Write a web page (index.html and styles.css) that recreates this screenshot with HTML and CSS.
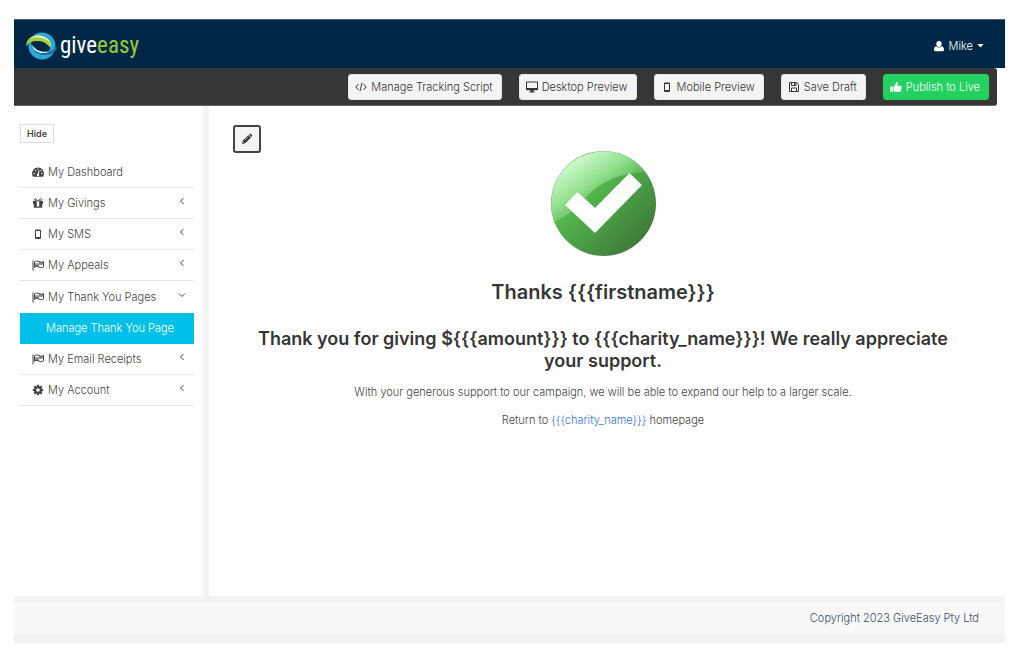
FILE: index.html
```html
<!DOCTYPE html>
<html lang="en">
<head>
  <meta charset="UTF-8">
  <meta name="viewport" content="width=device-width, initial-scale=1.0">
  <title>Manage Thank You Page</title>
  <link rel="stylesheet" href="styles.css">
</head>
<body>

  <!-- Shared icon shapes -->
  <svg class="sprite" aria-hidden="true">
    <symbol id="icon-flag" viewBox="0 0 12 12">
      <path d="M1 1.500v10" stroke="currentColor" stroke-width="1"/>
      <path d="M2.500 2.800c2-1.200 3-1 4.500-.2s2.500.9 4.500-.1v5.500c-2 1-3 .9-4.500.1s-2.500-1-4.500.2z" fill="none" stroke="currentColor" stroke-width="1"/>
      <path d="M2.500 4.800c2-1 2.500-1 4.500 0V2.600c1.500.8 2.500.9 4.500 0v2.700c-2 .9-3 .9-4.500.1v2.700c-1.500-.8-2.500-1-4.500.2z" fill="currentColor" opacity=".6"/>
    </symbol>
    <symbol id="icon-mobile" viewBox="0 0 12 12">
      <path fill-rule="evenodd" fill="currentColor" d="M4 1.500h4q1 0 1 1v7.500q0 1-1 1H4q-1 0-1-1V2.500q0-1 1-1zM4 3v6h4V3z"/>
    </symbol>
    <symbol id="icon-left" viewBox="0 0 8 8">
      <path d="M5.500 1L2.500 4l3 3" fill="none" stroke="currentColor" stroke-width="1"/>
    </symbol>
    <symbol id="icon-down" viewBox="0 0 8 8">
      <path d="M1 2.500l3 3 3-3" fill="none" stroke="currentColor" stroke-width="1"/>
    </symbol>
  </svg>

  <header class="header">
    <a class="logo" href="#">
      <svg class="logo-mark" viewBox="0 0 32 28" aria-hidden="true">
        <circle cx="16" cy="14" r="13.500" fill="#29abe2"/>
        <ellipse cx="14.500" cy="14" rx="10" ry="5" transform="rotate(22 14.500 14)" fill="#002846"/>
        <path d="M0 13.500C1 6 7 2.500 14 3.500c7 1 11.500 5 11.500 11.500l-3-1C20 10.500 16 9 11.500 9 7 9 3 10 .5 14z" fill="#a6ce39"/>
        <path d="M3.500 7C8 2.500 16 2.200 21 6.500c2 1.700 3.500 3.500 4 5.500-3-4-7-6-11.500-6.500C9.500 5 6 5.500 3.500 7z" fill="#eaf6d0"/>
        <path d="M31.500 14c-1 6.500-7 9.500-14 9-6.500-.5-11-4.500-11.500-10 4 5 8 7 13 7 5.500 0 9.500-2 12.500-6z" fill="#1a6795"/>
        <path d="M6 12.500c3 5.500 8.500 8.300 17.500 7-7 3.500-16.500 1-17.500-7z" fill="#e6f5fc"/>
      </svg>
      <span class="logo-text">give<span class="logo-accent">easy</span></span>
    </a>
    <button class="user-menu" type="button">
      <svg class="icon" viewBox="0 0 12 12" aria-hidden="true">
        <path fill="currentColor" d="M6 1c1.700 0 2.700 1.200 2.700 2.800S7.500 7 6 7 3.300 5.400 3.300 3.800 4.300 1 6 1zM3.500 6.300C4.800 8 7.200 8 8.500 6.300c1.600.2 2.500 1.500 2.500 3.700 0 .7-.5 1.200-1.300 1.200H2.300C1.500 11.200 1 10.700 1 10c0-2.200.9-3.500 2.500-3.700z"/>
      </svg>
      <span>Mike</span>
      <svg class="caret" viewBox="0 0 8 5" aria-hidden="true"><path d="M0 0h8L4 4.500z" fill="currentColor"/></svg>
    </button>
  </header>

  <div class="page">
    <div class="toolbar">
      <button class="btn" type="button">
        <svg class="icon" viewBox="0 0 12 12" aria-hidden="true"><path d="M3.500 3L.8 6l2.700 3M8.500 3l2.700 3-2.700 3M7 1.800l-2 8.400" fill="none" stroke="currentColor" stroke-width="1"/></svg>
        Manage Tracking Script
      </button>
      <button class="btn" type="button">
        <svg class="icon" viewBox="0 0 12 12" aria-hidden="true"><path fill-rule="evenodd" fill="currentColor" d="M.8.500h10.400q.8 0 .8.800v7.200q0 .8-.8.800H7.500V10.500h1.200v1H3.300v-1h1.200V9.300H.8Q0 9.300 0 8.500V1.300Q0 .500.800.500zM1 1.500v5.500h10V1.500z"/></svg>
        Desktop Preview
      </button>
      <button class="btn" type="button">
        <svg class="icon" aria-hidden="true"><use href="#icon-mobile"/></svg>
        Mobile Preview
      </button>
      <button class="btn" type="button">
        <svg class="icon" viewBox="0 0 12 12" aria-hidden="true">
          <path d="M1.500 1.500h7l2 2v7h-9z" fill="none" stroke="currentColor" stroke-width="1"/>
          <path d="M3.500 1.500v3h4.500v-3M3.500 10.500V7h5v3.500M6.500 2v2" fill="none" stroke="currentColor" stroke-width="1"/>
        </svg>
        Save Draft
      </button>
      <button class="btn btn-publish" type="button">
        <svg class="icon" viewBox="0 0 12 12" aria-hidden="true"><path fill="currentColor" d="M.3 5.500h2.500v5.300H.3zM3.500 5.600C5 4.800 5.600 3.500 5.800 1.800 5.900.8 7.600.8 7.800 2.300c.1.800-.2 1.700-.6 2.500h3.300c1.200 0 1.500 1.200.8 1.800.5.600.4 1.300-.2 1.700.3.600.1 1.200-.4 1.500.1.800-.4 1.200-1.300 1.200H7c-1.500 0-2.300-.5-3.500-.6z"/></svg>
        Publish to Live
      </button>
    </div>

    <div class="columns">
      <nav class="sidebar">
        <button class="btn-hide" type="button">Hide</button>
        <ul class="menu">
          <li><a class="menu-link" href="#">
            <svg class="icon" viewBox="0 0 12 12" aria-hidden="true">
              <path fill="currentColor" d="M6 1.500a6 6 0 0 1 5 9.200H1A6 6 0 0 1 6 1.500z"/>
              <path d="M6 9l1-4.500" stroke="#fff" stroke-width="1"/>
              <g fill="#fff"><circle cx="6" cy="9" r="1.200"/><circle cx="2.200" cy="7.500" r=".7"/><circle cx="3.400" cy="4.600" r=".7"/><circle cx="6" cy="3.200" r=".6"/><circle cx="8.900" cy="4.600" r=".7"/><circle cx="9.900" cy="7.500" r=".7"/></g>
            </svg>
            My Dashboard</a></li>
          <li><a class="menu-link" href="#">
            <svg class="icon" viewBox="0 0 12 12" aria-hidden="true">
              <path fill="currentColor" d="M1 4h3.800v3H1zM7.200 4H11v3H7.200zM1.800 7h3v3.800h-3zM7.200 7h3v3.800h-3zM4.800 9.500h2.400v1.300H4.800z"/>
              <path d="M5.500 4C4.500 1.500 2.500 1.200 2.500 2.800 2.500 3.800 4 4 5.500 4zM6.500 4c1-2.500 3-2.800 3-1.200 0 1-1.500 1.200-3 1.200z" fill="none" stroke="currentColor" stroke-width="1"/>
            </svg>
            My Givings<svg class="arrow" aria-hidden="true"><use href="#icon-left"/></svg></a></li>
          <li><a class="menu-link" href="#">
            <svg class="icon" aria-hidden="true"><use href="#icon-mobile"/></svg>
            My SMS<svg class="arrow" aria-hidden="true"><use href="#icon-left"/></svg></a></li>
          <li><a class="menu-link" href="#">
            <svg class="icon" aria-hidden="true"><use href="#icon-flag"/></svg>
            My Appeals<svg class="arrow" aria-hidden="true"><use href="#icon-left"/></svg></a></li>
          <li>
            <a class="menu-link menu-open" href="#">
              <svg class="icon" aria-hidden="true"><use href="#icon-flag"/></svg>
              My Thank You Pages<svg class="arrow" aria-hidden="true"><use href="#icon-down"/></svg></a>
            <a class="submenu-link" href="#">Manage Thank You Page</a>
          </li>
          <li><a class="menu-link" href="#">
            <svg class="icon" aria-hidden="true"><use href="#icon-flag"/></svg>
            My Email Receipts<svg class="arrow" aria-hidden="true"><use href="#icon-left"/></svg></a></li>
          <li><a class="menu-link" href="#">
            <svg class="icon" viewBox="0 0 12 12" aria-hidden="true">
              <circle cx="6" cy="6" r="2.900" fill="none" stroke="currentColor" stroke-width="2.200"/>
              <path d="M6 .8v1.700M6 9.500v1.700M.8 6h1.700M9.500 6h1.700M2.300 2.300l1.200 1.200M8.500 8.500l1.200 1.200M2.300 9.700l1.200-1.200M8.500 3.500l1.200-1.200" stroke="currentColor" stroke-width="2"/>
            </svg>
            My Account<svg class="arrow" aria-hidden="true"><use href="#icon-left"/></svg></a></li>
        </ul>
      </nav>

      <main class="content">
        <button class="btn-edit" type="button" aria-label="Edit">
          <svg class="icon" viewBox="0 0 12 12" aria-hidden="true">
            <path fill="currentColor" d="M1 11l.7-3.200L7.500 2l2.500 2.500-5.800 5.800zM8.100 1.400l.7-.6q.5-.4 1 0l1.400 1.400q.4.500 0 1l-.6.700z"/>
            <path d="M3.500 7.500l4-4M2 8.800l1.200 1.200" stroke="#f4f4f4" stroke-width=".6"/>
          </svg>
        </button>
        <div class="thanks">
          <svg class="check" viewBox="0 0 105 105" role="img" aria-label="Success">
            <defs>
              <linearGradient id="ball" x1=".2" y1=".2" x2=".85" y2=".85">
                <stop offset=".2" stop-color="#55bd4e"/>
                <stop offset="1" stop-color="#3f7b3b"/>
              </linearGradient>
              <linearGradient id="shine" x1=".15" y1=".1" x2=".75" y2=".75">
                <stop offset="0" stop-color="#dcffdc"/>
                <stop offset=".5" stop-color="#92e08d"/>
                <stop offset=".9" stop-color="#4ca648"/>
              </linearGradient>
              <linearGradient id="tick" x1="0" y1="0" x2="0" y2="1">
                <stop offset="0" stop-color="#f3fbf3"/>
                <stop offset=".6" stop-color="#fff"/>
              </linearGradient>
            </defs>
            <circle cx="52.500" cy="52.500" r="52.500" fill="url(#ball)"/>
            <path d="M3.500 71A52.500 52.500 0 0 1 94.500 21Q58 22 35 46 22 62 3.500 71z" fill="url(#shine)"/>
            <path d="M14 54l12.500-13L44 57 78.500 22 91 34 44 82z" fill="url(#tick)"/>
          </svg>
          <h1>Thanks {{{firstname}}}</h1>
          <h2>Thank you for giving ${{{amount}}} to {{{charity_name}}}! We really appreciate your support.</h2>
          <p>With your generous support to our campaign, we will be able to expand our help to a larger scale.</p>
          <p>Return to <a href="#">{{{charity_name}}}</a> homepage</p>
        </div>
      </main>
    </div>
  </div>

  <footer class="footer">Copyright 2023 GiveEasy Pty Ltd</footer>

</body>
</html>
```
FILE: styles.css
```css
* {
  box-sizing: border-box;
}

body {
  display: flex;
  flex-direction: column;
  min-height: 100vh;
  margin: 0;
  padding: 19px 19px 4px 14px;
  background-color: #fff;
  color: #444;
  font-family: Inter, "Liberation Sans", sans-serif;
  font-size: 11px;
  font-weight: 300;
}

button {
  font-family: inherit;
  font-size: 11px;
  font-weight: 300;
  cursor: pointer;
}

.sprite {
  display: none;
}

.icon {
  width: 12px;
  height: 12px;
  flex: none;
}

/* Header */
.header {
  display: flex;
  align-items: center;
  justify-content: space-between;
  height: 49px;
  padding: 3px 21px 0 12px;
  background-color: #002846;
  border-top: 1px solid #4d6478;
}

.logo {
  display: flex;
  align-items: center;
  gap: 2px;
  text-decoration: none;
}

.logo-mark {
  width: 32px;
  height: 28px;
}

.logo-text {
  color: #fff;
  font-family: "Roboto Condensed", "Liberation Sans Narrow", Roboto, sans-serif;
  font-size: 23px;
  font-weight: 400;
  line-height: 28px;
}

.logo-accent {
  color: #9aca3c;
}

.user-menu {
  display: flex;
  align-items: center;
  gap: 4px;
  padding: 4px 0;
  border: none;
  background: none;
  color: #fff;
}

.caret {
  width: 7px;
  height: 4px;
}

/* Toolbar */
.page {
  display: flex;
  flex: 1;
  flex-direction: column;
  margin-right: 8px;
}

.toolbar {
  display: flex;
  justify-content: flex-end;
  gap: 17px;
  padding: 6px 8px 5px;
  background-color: #363636;
  border-bottom: 1px solid #666;
  border-radius: 0 3px 3px 0;
}

.btn {
  display: flex;
  align-items: center;
  gap: 4px;
  height: 26px;
  padding: 0 8px 0 6px;
  border: 1px solid #e4e4e4;
  border-radius: 3px;
  background-color: #f4f4f4;
  color: #363636;
}

.btn-publish {
  border-color: #23d160;
  background-color: #23d160;
  color: #fff;
}

/* Sidebar */
.columns {
  display: flex;
  flex: 1;
}

.sidebar {
  width: 195px;
  flex: none;
  padding: 18px 9px 0 6px;
  border-right: 6px solid #f4f4f4;
}

.btn-hide {
  height: 19px;
  padding: 0 6px;
  border: 1px solid #ddd;
  background-color: #fff;
  color: #444;
  font-size: 9px;
  font-weight: 600;
}

.menu {
  margin: 14px 0 0;
  padding: 0;
  list-style: none;
}

.menu-link {
  display: flex;
  align-items: center;
  gap: 4px;
  height: 31px;
  padding: 0 8px 0 12px;
  border-bottom: 1px solid #e7e7e7;
  color: #444;
  text-decoration: none;
}

.menu-open {
  height: 32px;
  border-bottom: none;
}

.arrow {
  width: 8px;
  height: 8px;
  margin: 0 0 5px auto;
}

.submenu-link {
  display: block;
  padding-left: 26px;
  background-color: #00bfe8;
  color: #fff;
  line-height: 31px;
  text-decoration: none;
}

/* Content */
.content {
  flex: 1;
  padding: 19px 24px;
}

.btn-edit {
  display: flex;
  align-items: center;
  justify-content: center;
  width: 28px;
  height: 28px;
  padding: 0;
  border: 2px solid #444;
  border-radius: 3px;
  background-color: #f4f4f4;
  color: #363636;
}

.thanks {
  padding: 0 20px;
  text-align: center;
}

.check {
  display: block;
  width: 105px;
  height: 105px;
  margin: -2px auto 24px;
}

h1, h2 {
  margin: 0;
  color: #363636;
  font-weight: 600;
}

h1 {
  margin-bottom: 24px;
  font-size: 20px;
  line-height: 24px;
}

h2 {
  margin-bottom: 12px;
  font-size: 18px;
  line-height: 22px;
}

p {
  margin: 0 0 12px;
  line-height: 16px;
}

p a {
  color: #3273dc;
  text-decoration: none;
}

/* Footer */
.footer {
  height: 47px;
  padding: 0 26px;
  border: solid #f3f3f3;
  border-width: 6px 0 9px;
  background-color: #f8f8f8;
  color: #3a4f68;
  line-height: 32px;
  text-align: right;
}
```
